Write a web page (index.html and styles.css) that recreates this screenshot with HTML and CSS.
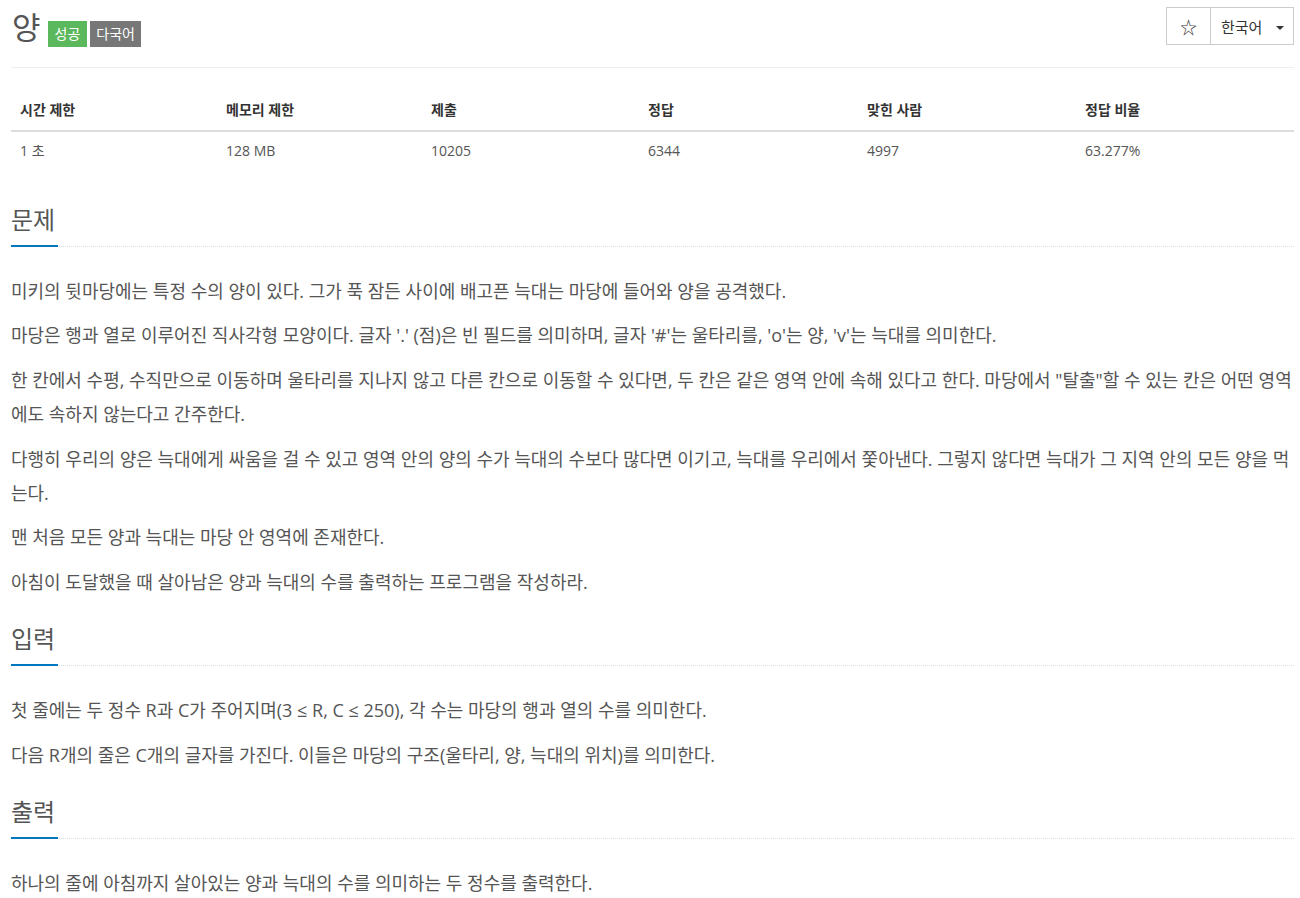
FILE: index.html
```html
<!DOCTYPE html>
<html lang="ko">
<head>
    <meta charset="UTF-8">
    <meta name="viewport" content="width=device-width, initial-scale=1.0">
    <title>양</title>
    <link rel="stylesheet" href="styles.css">
</head>
<body>
    <div class="container">
        <div class="page-header">
            <div class="title-wrap">
                <h1 id="problem_title">양</h1>
                <span class="label label-success">성공</span>
                <span class="label label-default">다국어</span>
            </div>
            <div class="btn-group">
                <button class="btn btn-star">☆</button>
                <button class="btn btn-lang">한국어 <span class="caret"></span></button>
            </div>
        </div>

        <table class="problem-info">
            <thead>
                <tr>
                    <th class="c1">시간 제한</th>
                    <th class="c2">메모리 제한</th>
                    <th class="c3">제출</th>
                    <th class="c4">정답</th>
                    <th class="c5">맞힌 사람</th>
                    <th>정답 비율</th>
                </tr>
            </thead>
            <tbody>
                <tr>
                    <td>1 초</td>
                    <td>128 MB</td>
                    <td>10205</td>
                    <td>6344</td>
                    <td>4997</td>
                    <td>63.277%</td>
                </tr>
            </tbody>
        </table>

        <section class="problem-section">
            <div class="headline"><h2>문제</h2></div>
            <div class="problem-text">
                <p>미키의 뒷마당에는 특정 수의 양이 있다. 그가 푹 잠든 사이에 배고픈 늑대는 마당에 들어와 양을 공격했다.</p>
                <p>마당은 행과 열로 이루어진 직사각형 모양이다. 글자 '.' (점)은 빈 필드를 의미하며, 글자 '#'는 울타리를, 'o'는 양, 'v'는 늑대를 의미한다.</p>
                <p>한 칸에서 수평, 수직만으로 이동하며 울타리를 지나지 않고 다른 칸으로 이동할 수 있다면, 두 칸은 같은 영역 안에 속해 있다고 한다. 마당에서 "탈출"할 수 있는 칸은 어떤 영역에도 속하지 않는다고 간주한다.</p>
                <p>다행히 우리의 양은 늑대에게 싸움을 걸 수 있고 영역 안의 양의 수가 늑대의 수보다 많다면 이기고, 늑대를 우리에서 쫓아낸다. 그렇지 않다면 늑대가 그 지역 안의 모든 양을 먹는다.</p>
                <p>맨 처음 모든 양과 늑대는 마당 안 영역에 존재한다.</p>
                <p>아침이 도달했을 때 살아남은 양과 늑대의 수를 출력하는 프로그램을 작성하라.</p>
            </div>
        </section>

        <section class="problem-section">
            <div class="headline"><h2>입력</h2></div>
            <div class="problem-text">
                <p>첫 줄에는 두 정수 R과 C가 주어지며(3 ≤ R, C ≤ 250), 각 수는 마당의 행과 열의 수를 의미한다.</p>
                <p>다음 R개의 줄은 C개의 글자를 가진다. 이들은 마당의 구조(울타리, 양, 늑대의 위치)를 의미한다.</p>
            </div>
        </section>

        <section class="problem-section">
            <div class="headline"><h2>출력</h2></div>
            <div class="problem-text">
                <p>하나의 줄에 아침까지 살아있는 양과 늑대의 수를 의미하는 두 정수를 출력한다.</p>
            </div>
        </section>
    </div>
</body>
</html>
```

FILE: styles.css
```css
body {
    margin: 0;
    font-family: 'Open Sans', 'Noto Sans CJK KR', sans-serif;
    color: #555;
    background: #fff;
}

.container {
    padding: 0 6px 0 11px;
}

.page-header {
    display: flex;
    justify-content: space-between;
    align-items: flex-start;
    height: 60px;
    padding-top: 7px;
    border-bottom: 1px solid #eee;
}

.title-wrap {
    display: flex;
    align-items: flex-start;
    gap: 3px;
    padding-left: 1px;
}

h1 {
    margin: 0 4px 0 0;
    font-size: 31px;
    font-weight: normal;
    line-height: 40px;
    color: #555;
}

.label {
    display: inline-block;
    height: 26px;
    padding: 0 6px;
    margin-top: 14px;
    font-size: 14px;
    line-height: 26px;
    color: #fff;
}

.label-success {
    background: #5cb85c;
    padding: 0 7px;
}

.label-default {
    background: #777;
}

.btn-group {
    display: flex;
}

.btn {
    height: 38px;
    background: #fff;
    border: 1px solid #ccc;
    font-family: inherit;
    font-size: 15px;
    color: #333;
    padding: 0;
}

.btn-star {
    width: 45px;
    font-size: 17px;
}

.btn-lang {
    width: 84px;
    margin-left: -1px;
    text-align: left;
    padding-left: 10px;
}

.caret {
    display: inline-block;
    width: 0;
    height: 0;
    margin-left: 10px;
    vertical-align: middle;
    border-top: 4px solid #333;
    border-left: 4px solid transparent;
    border-right: 4px solid transparent;
}

.problem-info {
    width: 100%;
    margin-top: 23px;
    border-collapse: collapse;
    font-size: 14px;
    color: #333;
}

.problem-info th,
.problem-info td {
    padding: 9px 9px;
    text-align: left;
    line-height: 20px;
}

.problem-info th {
    padding-bottom: 10px;
    font-weight: bold;
    border-bottom: 2px solid #ddd;
}

.problem-info td {
    color: #555;
}

.c1 { width: 188px; }
.c2 { width: 187px; }
.c3 { width: 199px; }
.c4 { width: 201px; }
.c5 { width: 200px; }

.problem-section {
    margin-top: 33px;
}

.problem-section + .problem-section {
    margin-top: 23px;
}

.headline {
    border-bottom: 1px dotted #ddd;
    margin-bottom: 27px;
}

.headline h2 {
    display: inline-block;
    margin: 0 0 -1px;
    padding: 0 3px 8px 0;
    font-size: 24px;
    font-weight: normal;
    line-height: 34px;
    color: #555;
    border-bottom: 2px solid #0076c0;
}

.problem-text p {
    margin: 0 0 10px;
    font-size: 18px;
    line-height: 34.4px;
}
```
